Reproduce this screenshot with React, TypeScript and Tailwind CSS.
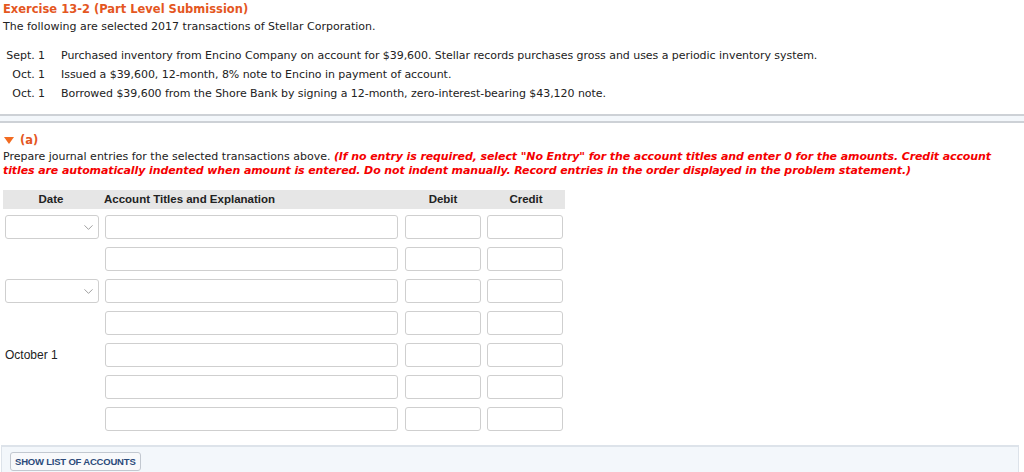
import { ChevronDown } from "lucide-react"

const verdana = "font-['DejaVu_Sans',Verdana,sans-serif]"
const tahoma = "font-['Liberation_Sans',Tahoma,sans-serif]"

const transactions = [
  { date: "Sept. 1", text: "Purchased inventory from Encino Company on account for $39,600. Stellar records purchases gross and uses a periodic inventory system." },
  { date: "Oct. 1", text: "Issued a $39,600, 12-month, 8% note to Encino in payment of account." },
  { date: "Oct. 1", text: "Borrowed $39,600 from the Shore Bank by signing a 12-month, zero-interest-bearing $43,120 note." },
]

const rows: { kind: "select" | "label" | "none"; label?: string }[] = [
  { kind: "select" },
  { kind: "none" },
  { kind: "select" },
  { kind: "none" },
  { kind: "label", label: "October 1" },
  { kind: "none" },
  { kind: "none" },
]

function Box({ className }: { className: string }) {
  return <div className={`h-[24px] border border-[#cfcfcf] rounded-[3px] bg-white ${className}`} />
}

export default function App() {
  return (
    <div className={`w-[1024px] h-[472px] overflow-hidden bg-white text-[#222] ${verdana}`}>
      <div className="px-[3px] pt-[1px]">
        <div className="text-[11.5px] font-bold text-[#e4571f] leading-[16px]">Exercise 13-2 (Part Level Submission)</div>
        <div className="text-[11px] leading-[16px] mt-[2px]">The following are selected 2017 transactions of Stellar Corporation.</div>
      </div>

      <div className="mt-[11px] text-[11px] leading-[19px] tracking-[-0.05px]">
        {transactions.map((t, i) => (
          <div key={i} className="flex">
            <div className="w-[45px] text-right shrink-0">{t.date}</div>
            <div className="ml-[16px]">{t.text}</div>
          </div>
        ))}
      </div>

      <div className="mt-[11px] h-[9px] border-y-2 border-[#cdd1d6] bg-[#f3f7fb]" />

      <div className="px-[3px] mt-[9px]">
        <div className="flex items-center gap-[6px] text-[11.5px] font-bold text-[#e4571f] leading-[16px]">
          <svg width="10" height="7" viewBox="0 0 10 7" className="ml-[1px]">
            <polygon points="0,0 10,0 5,7" fill="#f26b21" />
          </svg>
          <span>(a)</span>
        </div>
        <div className="text-[11px] leading-[14px] mt-[2px]">
          Prepare journal entries for the selected transactions above.{" "}
          <span className="italic font-bold text-[#f40000] tracking-[-0.1px]">
            (If no entry is required, select "No Entry" for the account titles and enter 0 for the amounts. Credit account titles are automatically indented when amount is entered. Do not indent manually. Record entries in the order displayed in the problem statement.)
          </span>
        </div>

        <div className="w-[562px] mt-[12px]">
          <div className={`h-[19px] bg-[#e6e6e6] flex items-center text-[11.5px] font-bold text-[#222] ${tahoma}`}>
            <div className="w-[96px] text-center">Date</div>
            <div className="ml-[5px] w-[300px]">Account Titles and Explanation</div>
            <div className="w-[78px] text-center">Debit</div>
            <div className="ml-[5px] w-[78px] text-center">Credit</div>
          </div>

          <div className="pt-[6px] flex flex-col gap-[8px]">
            {rows.map((r, i) => (
              <div key={i} className="flex items-center">
                <div className="w-[98px] ml-[2px] shrink-0">
                  {r.kind === "select" && (
                    <div className="h-[24px] w-[94px] border border-[#cfcfcf] rounded-[3px] bg-white flex items-center justify-end pr-[2px]">
                      <ChevronDown size={15} strokeWidth={1} className="text-[#666]" />
                    </div>
                  )}
                  {r.kind === "label" && (
                    <div className={`text-[12px] ${tahoma}`}>{r.label}</div>
                  )}
                </div>
                <Box className="ml-[2px] w-[293px]" />
                <Box className="ml-[7px] w-[76px]" />
                <Box className="ml-[6px] w-[76px]" />
              </div>
            ))}
          </div>
        </div>
      </div>

      <div className="mt-[14px] ml-[1px] mr-[5px] h-[40px] border-t-2 border-x border-[#dde3ea] bg-[#f3f7fb] pt-[5px] pl-[8px] flex items-start">
        <button className={`h-[19px] px-[4px] border border-[#c2c8d0] rounded-[3px] bg-[#f8f9fb] text-[9.5px] leading-[17px] font-bold text-[#2b4a7a] tracking-[-0.2px] ${tahoma}`}>
          SHOW LIST OF ACCOUNTS
        </button>
      </div>
    </div>
  )
}
